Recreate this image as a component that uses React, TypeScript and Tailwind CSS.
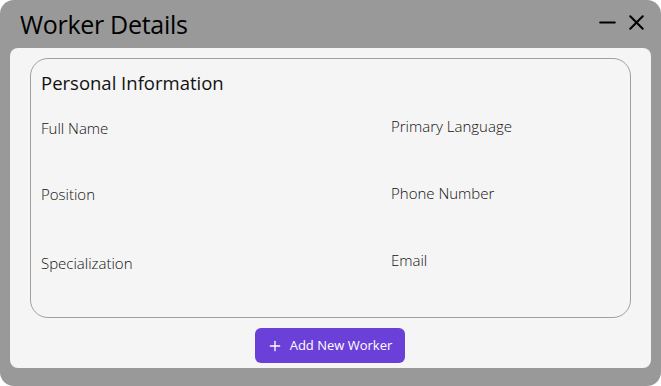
import { Plus, Minus, X } from "lucide-react"

const leftFields = ["Full Name", "Position", "Specialization"]
const rightFields = ["Primary Language", "Phone Number", "Email"]

export default function App() {
  return (
    <div className="w-[661px] h-[386px] bg-white" style={{ fontFamily: '"Open Sans", "Noto Sans", sans-serif' }}>
      <div className="w-full h-full bg-[#999999] rounded-[14px] flex flex-col px-[10px] pb-[18px]">
        <div className="h-[48px] flex items-center justify-between pl-[10px] pr-[2px]">
          <h1 className="text-[25px] text-black font-normal tracking-[-0.3px] leading-none mt-[1px]">Worker Details</h1>
          <div className="flex items-center gap-[4px] -mt-[4px]">
            <Minus size={25} strokeWidth={2} className="text-black" />
            <X size={25} strokeWidth={2} className="text-black" />
          </div>
        </div>
        <div className="flex-1 bg-[#f5f5f5] rounded-[8px] flex flex-col items-center pt-[10px] px-[20px]">
          <div className="w-full h-[260px] border border-[#a0a0a0] rounded-[18px] px-[10px] pt-[15px]">
            <h2 className="text-[18.5px] text-[#111] font-normal leading-none">Personal Information</h2>
            <div className="grid grid-cols-[350px_1fr]">
              <div className="flex flex-col pt-[25px]">
                <div className="text-[15px] font-light text-[#111] leading-[20px]">{leftFields[0]}</div>
                <div className="text-[15px] font-light text-[#111] leading-[20px] mt-[46px]">{leftFields[1]}</div>
                <div className="text-[15px] font-light text-[#111] leading-[20px] mt-[49px]">{leftFields[2]}</div>
              </div>
              <div className="flex flex-col pt-[23px] gap-[47px]">
                {rightFields.map((f) => (
                  <div key={f} className="text-[15px] font-light text-[#111] leading-[20px]">{f}</div>
                ))}
              </div>
            </div>
          </div>
          <button className="mt-[10px] w-[150px] h-[35px] bg-[#6b40d9] rounded-[6px] flex items-center justify-center gap-[7px] text-white text-[13px] -ml-[2px]">
            <Plus size={16} strokeWidth={2} />
            <span>Add New Worker</span>
          </button>
        </div>
      </div>
    </div>
  )
}
